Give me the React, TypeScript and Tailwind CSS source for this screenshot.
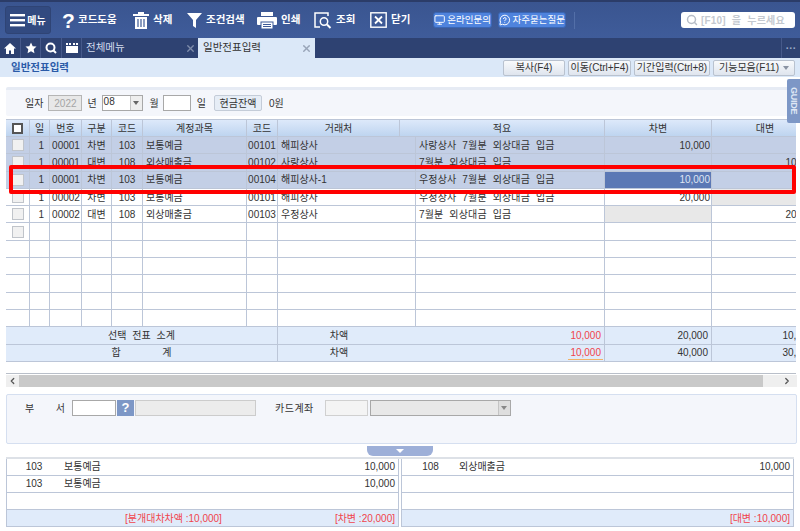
import { ChevronLeft, ChevronRight, MessageCircleQuestion, Monitor, Search, X } from "lucide-react";
import { type FC, type ReactNode } from "react";

const FONT = "font-['Liberation_Sans','Noto_Sans_CJK_KR',sans-serif]";

const rows = [
  { day: "1", no: "00001", kind: "차변", code: "103", account: "보통예금", cCode: "00101", client: "해피상사", memo: "사랑상사 7월분 외상대금 입금", debit: "10,000", credit: "", selected: true },
  { day: "1", no: "00001", kind: "대변", code: "108", account: "외상매출금", cCode: "00102", client: "사랑상사", memo: "7월분 외상대금 입금", debit: "", credit: "10,000", selected: true },
  { day: "1", no: "00001", kind: "차변", code: "103", account: "보통예금", cCode: "00104", client: "해피상사-1", memo: "우정상사 7월분 외상대금 입금", debit: "10,000", credit: "", selected: true, active: true },
  { day: "1", no: "00002", kind: "차변", code: "103", account: "보통예금", cCode: "00101", client: "해피상사", memo: "우정상사 7월분 외상대금 입금", debit: "20,000", credit: "", grayCredit: true },
  { day: "1", no: "00002", kind: "대변", code: "108", account: "외상매출금", cCode: "00103", client: "우정상사", memo: "7월분 외상대금 입금", debit: "", credit: "20,000", grayDebit: true },
];

const ToolItem: FC<{ icon: ReactNode; label: string; width: string }> = ({ icon, label, width }) => (
  <div className={`flex items-center gap-1 shrink-0 ${width}`}>
    {icon}
    <span className="text-[10.5px] font-bold text-white whitespace-nowrap">{label}</span>
  </div>
);

const Cell: FC<{ className?: string; children?: ReactNode }> = ({ className = "", children }) => (
  <div className={`flex items-center border-r border-b border-[#bcc6d8] overflow-hidden whitespace-nowrap ${className}`}>
    {children}
  </div>
);

const TopButton: FC<{ label: string; width: string; children?: ReactNode }> = ({ label, width, children }) => (
  <div className={`h-[16px] flex items-center justify-center gap-1 rounded-[2px] border border-[#b9c2cf] bg-gradient-to-b from-[#f8fafc] to-[#dfe5ee] text-[10px] text-[#333] whitespace-nowrap shrink-0 ${width}`}>
    {label}
    {children}
  </div>
);

const CheckBox = () => <div className="w-[12px] h-[12px] border border-[#c0c4ca] bg-[#f1f1f1]" />;

const SlipRow: FC<{ row?: (typeof rows)[number]; check?: boolean }> = ({ row, check }) => {
  const bg = row?.selected ? "bg-[#c3cfe6]" : "bg-white";
  return (
    <div className={`grid grid-cols-[24px_20px_32px_30px_31px_104px_31px_138px_189px_107px_107px] h-[17.3px] text-[10px] text-[#333] ${bg}`}>
      <Cell className="justify-center">{(row || check) && <CheckBox />}</Cell>
      <Cell className="justify-end pr-[5px]">{row?.day}</Cell>
      <Cell className="justify-center pl-px">{row?.no}</Cell>
      <Cell className="justify-center">{row?.kind}</Cell>
      <Cell className="justify-center">{row?.code}</Cell>
      <Cell className="pl-[3px]">{row?.account}</Cell>
      <Cell className="justify-center">{row?.cCode}</Cell>
      <Cell className="pl-[3px]">{row?.client}</Cell>
      <Cell className="pl-[3px] tracking-[0.15px] [word-spacing:3px]">{row?.memo}</Cell>
      <Cell className={`justify-end pr-[1px] ${row?.active ? "bg-[#5b78b5] text-[#dfe6f4]" : row?.grayDebit ? "bg-[#e8e8e8]" : ""}`}>{row?.debit}</Cell>
      <Cell className={`justify-end pr-[2px] ${row?.grayCredit ? "bg-[#e8e8e8]" : ""}`}>{row?.credit}</Cell>
    </div>
  );
};

const SumRow: FC<{ label: ReactNode; diff: string; debit: string; credit: string; underline?: boolean }> = ({ label, diff, debit, credit, underline }) => (
  <div className="grid grid-cols-[272px_122px_205px_107px_107px] h-[17.3px] bg-[#e0ebfa] text-[10px] text-[#333]">
    <Cell className="justify-center [word-spacing:3px]">{label}</Cell>
    <div className="flex items-center justify-center border-b border-[#bcc6d8]">차액</div>
    <Cell className="justify-end pr-[1px] text-[#f0444c]">
      <span className={underline ? "border-b border-[#f2b266] px-[2px] leading-[13px]" : "px-[2px]"}>{diff}</span>
    </Cell>
    <Cell className="justify-end pr-[3px]">{debit}</Cell>
    <Cell className="justify-end pr-[5px]">{credit}</Cell>
  </div>
);

const LedgerRow: FC<{ code?: string; name?: string; amount?: string; codeW: string }> = ({ code, name, amount, codeW }) => (
  <div className="flex items-center h-[17px] border-b border-[#bcc6d8] text-[10px] text-[#333] pr-[3px] pb-px">
    <span className={`text-center shrink-0 ${codeW}`}>{code}</span>
    <span>{name}</span>
    <span className="ml-auto">{amount}</span>
  </div>
);

export default function App() {
  return (
    <div className={`w-[800px] h-[531px] overflow-hidden bg-white flex flex-col ${FONT}`}>
      {/* toolbar */}
      <div className="h-[38px] shrink-0 flex items-center bg-gradient-to-b from-[#3a5590] to-[#3f5c9a] border-t-2 border-[#2b3c68] pl-[5px]">
        <div className="w-[46px] h-[28px] flex items-center justify-center gap-[2px] rounded-[3px] border border-[#2f4475] bg-[#324a80] shrink-0">
          <svg width="15" height="13" viewBox="0 0 15 13" fill="#fff"><rect y="0" width="15" height="2.4" /><rect y="5" width="15" height="2.4" /><rect y="10" width="15" height="2.4" /></svg>
          <span className="text-[10px] font-bold text-white">메뉴</span>
        </div>
        <div className="w-[11px] shrink-0" />
        <ToolItem width="w-[71px]" label="코드도움" icon={<span className="text-[21px] leading-none font-bold text-white w-[12px] text-center">?</span>} />
        <ToolItem width="w-[54px]" label="삭제" icon={
          <svg width="16" height="17" viewBox="0 0 16 17" fill="#fff"><rect x="5" y="0" width="6" height="2" /><rect x="0" y="2" width="16" height="2" /><path d="M2 5h12v12H2z" /><path d="M5 7v8M8 7v8M11 7v8" stroke="#3d5a97" strokeWidth="1.2" /></svg>
        } />
        <ToolItem width="w-[70px]" label="조건검색" icon={
          <svg width="15" height="15" viewBox="0 0 15 15" fill="#fff"><path d="M0 0h15L9 7v8L6 13V7z" /></svg>
        } />
        <ToolItem width="w-[57px]" label="인쇄" icon={
          <svg width="20" height="17" viewBox="0 0 20 17" fill="#fff"><rect x="4" y="0" width="12" height="4" /><rect x="0" y="5" width="20" height="8" rx="1" /><rect x="4" y="10" width="12" height="7" stroke="#3d5a97" /><path d="M6 12.5h8M6 14.5h8" stroke="#3d5a97" /></svg>
        } />
        <ToolItem width="w-[56px]" label="조회" icon={
          <svg width="18" height="17" viewBox="0 0 18 17" fill="none" stroke="#fff" strokeWidth="1.5"><path d="M7 1H1v14h5M7 1h7v3" /><circle cx="10" cy="9.5" r="3.7" /><path d="M13 12.5l3.5 3.5" strokeWidth="2" /></svg>
        } />
        <ToolItem width="w-[63px]" label="닫기" icon={
          <svg width="17" height="16" viewBox="0 0 17 16" fill="none" stroke="#fff"><rect x="0.8" y="0.8" width="15.4" height="14.4" strokeWidth="1.4" /><path d="M5 4.5l7 7M12 4.5l-7 7" strokeWidth="1.8" /></svg>
        } />
        <div className="w-[59px] h-[16px] flex items-center justify-center gap-[2px] rounded-[3px] bg-[#4f83dd] border border-[#3a66b4] text-[9.5px] text-white whitespace-nowrap shrink-0">
          <Monitor className="w-[12px] h-[12px]" />온라인문의
        </div>
        <div className="w-[68px] h-[16px] ml-[6px] flex items-center justify-center gap-[2px] rounded-[3px] bg-[#4f83dd] border border-[#3a66b4] text-[9.5px] text-white whitespace-nowrap shrink-0">
          <MessageCircleQuestion className="w-[12px] h-[12px]" />자주묻는질문
        </div>
        <div className="w-px h-[17px] ml-[8px] bg-[#536fa8] shrink-0" />
        <div className="w-[114px] h-[16px] ml-auto mr-[5px] flex items-center gap-[3px] pl-[5px] rounded-[3px] bg-white text-[10px] font-bold text-[#c4c9d0] whitespace-nowrap shrink-0 [word-spacing:3px] tracking-[0.2px]">
          <Search className="w-[12px] h-[12px] text-[#b7bdc7]" strokeWidth={3} />[F10] 을 누르세요
        </div>
      </div>

      {/* tabs */}
      <div className="h-[20px] shrink-0 flex bg-[#2e4272] text-[10.5px]">
        <div className="w-[21px] flex items-center justify-center border-r border-[#46598a]">
          <svg width="12" height="11" viewBox="0 0 12 11" fill="#fff"><path d="M6 0l6 5.5h-2V11H7V7.5H5V11H2V5.5H0z" /></svg>
        </div>
        <div className="w-[20px] flex items-center justify-center border-r border-[#46598a]">
          <svg width="12" height="12" viewBox="0 0 24 24" fill="#fff"><path d="M12 1l3.4 7.3 7.6.9-5.6 5.4 1.5 8L12 18.6 5.1 22.6l1.5-8L1 9.2l7.6-.9z" /></svg>
        </div>
        <div className="w-[21px] flex items-center justify-center border-r border-[#46598a]">
          <svg width="12" height="12" viewBox="0 0 12 12" fill="none" stroke="#fff" strokeWidth="2"><circle cx="5.5" cy="5.5" r="4" /><path d="M8 8l3 3" /></svg>
        </div>
        <div className="w-[20px] flex items-center justify-center border-r border-[#46598a]">
          <svg width="12" height="10" viewBox="0 0 12 10" fill="#fff"><rect y="3" width="12" height="7" /><path d="M0 0h2v2H0zM3 0h2v2H3zM7 0h2v2H7zM10 0h2v2h-2z" /></svg>
        </div>
        <div className="w-[116px] flex items-center justify-between pl-[4px] pr-[2px] text-[#d3dcee]">
          전체메뉴<X className="w-[11px] h-[11px] text-[#7e8cab]" strokeWidth={3} />
        </div>
        <div className="w-[117px] flex items-center justify-between pl-[5px] pr-[3px] bg-[#dbe8f8] text-[#333]">
          일반전표입력<X className="w-[11px] h-[11px] text-[#98a4b8]" strokeWidth={3} />
        </div>
        <div className="ml-auto w-[19px] flex items-center justify-center border-l border-[#46598a] text-[#9aa9c7] font-bold leading-none">···</div>
      </div>

      {/* title */}
      <div className="h-[19px] shrink-0 flex items-center bg-[#dbe8f8] pl-[11px] pr-[5px]">
        <span className="text-[10.5px] font-bold text-[#2b5ba8]">일반전표입력</span>
        <div className="ml-auto flex gap-[3px]">
          <TopButton label="복사(F4)" width="w-[62px]" />
          <TopButton label="이동(Ctrl+F4)" width="w-[63px]" />
          <TopButton label="기간입력(Ctrl+8)" width="w-[76px]" />
          <TopButton label="기능모음(F11)" width="w-[82px]">
            <span className="w-0 h-0 border-x-[3px] border-x-transparent border-t-[4px] border-t-[#8a93a3]" />
          </TopButton>
        </div>
      </div>

      {/* search form */}
      <div className="h-[42px] shrink-0 relative pt-[10px] pl-[6px] pr-[3px]">
        <div className="h-[29px] flex items-center bg-[#f4f6fb] border-t-[3px] border-[#e6ebf4] rounded-[2px] text-[10px] text-[#333] pl-[19px]">
          <span>일자</span>
          <div className="w-[34px] h-[16px] ml-[5px] flex items-center justify-center bg-[#e8e8e8] border border-[#b5b5b5] text-[#a5a5a5]">2022</div>
          <span className="ml-[5px]">년</span>
          <div className="w-[41px] h-[16px] ml-[5px] flex border border-[#a8a8a8] bg-white">
            <span className="flex-1 pl-px leading-[12px]">08</span>
            <span className="w-[12px] flex items-center justify-center bg-[#eeeeee] border-l border-[#c4c4c4]">
              <span className="w-0 h-0 border-x-[3px] border-x-transparent border-t-[4px] border-t-[#666]" />
            </span>
          </div>
          <span className="ml-[7px]">월</span>
          <div className="w-[28px] h-[16px] ml-[4px] border border-[#a8a8a8] bg-white" />
          <span className="ml-[6px]">일</span>
          <div className="w-[48px] h-[16px] ml-[8px] flex items-center justify-center rounded-[2px] border border-[#c4ccd8] bg-[#e6edf6]">현금잔액</div>
          <span className="ml-[7px]">0원</span>
        </div>
        <div className="absolute right-0 top-[2px] w-[13px] h-[44px] flex items-center justify-center rounded-l-[2px] bg-[#7d97c6] z-10">
          <span className="[writing-mode:vertical-rl] text-[9px] font-bold text-[#dfe7f5] tracking-tight">GUIDE</span>
        </div>
      </div>

      {/* slip grid */}
      <div className="relative h-[255px] shrink-0 ml-[6px] mr-[4px] overflow-hidden border-b border-[#b9bfc9]">
        <div className="grid grid-cols-[24px_20px_32px_30px_31px_104px_31px_122px_205px_107px_107px] h-[18px] w-[818px] text-[10px] text-[#333] bg-gradient-to-b from-[#dde9fa] to-[#bcd3ef] border-t border-[#bcc6d8]">
          <Cell className="justify-center"><div className="w-[11px] h-[11px] border-2 border-[#555] bg-white" /></Cell>
          {["일", "번호", "구분", "코드", "계정과목", "코드", "거래처", "적요", "차변", "대변"].map((h, i) => (
            <Cell key={i} className="justify-center">{h}</Cell>
          ))}
        </div>
        <div className="w-[818px]">
          {rows.map((r, i) => <SlipRow key={i} row={r} />)}
          <SlipRow check />
          {[0, 1, 2, 3, 4].map((i) => <SlipRow key={i} />)}
          <SumRow label="선택 전표 소계" diff="10,000" debit="20,000" credit="10,000" />
          <SumRow label={<span className="flex w-[60px] justify-between"><span>합</span><span>계</span></span>} diff="10,000" debit="40,000" credit="30,000" underline />
        </div>
        {/* red annotation box */}
        <div className="absolute left-[3px] top-[46px] w-[787px] h-[29px] border-[4px] border-[#ff0000] rounded-[2px]" />
      </div>

      {/* scrollbar */}
      <div className="h-[12px] mt-px shrink-0 ml-[6px] mr-[3px] flex items-center bg-[#efefef]">
        <ChevronLeft className="w-[13px] h-[10px] text-[#555]" strokeWidth={3} />
        <div className="w-[744px] h-full bg-[#c9c9c9]" />
        <ChevronRight className="w-[10px] h-[10px] ml-auto mr-[5px] text-[#555]" strokeWidth={3} />
      </div>

      {/* department panel */}
      <div className="h-[50px] mt-[7px] shrink-0 ml-[6px] mr-[3px] bg-[#f4f6fb] border border-[#d5dff0] rounded-[2px] pt-[5px] pl-[18px] text-[10px] text-[#333]">
        <div className="flex items-center h-[16px]">
          <span className="w-[47px] flex justify-between pr-[7px]"><span>부</span><span>서</span></span>
          <div className="w-[44px] h-[16px] border border-[#a8a8a8] bg-white" />
          <div className="w-[17px] h-[16px] ml-px flex items-center justify-center bg-[#7d97c6] text-white text-[13px] font-bold">?</div>
          <div className="w-[121px] h-[16px] ml-px border border-[#cccccc] bg-[#ececec]" />
          <span className="ml-[19px] tracking-[0.5px]">카드계좌</span>
          <div className="w-[43px] h-[16px] ml-[11px] border border-[#d0d0d0] bg-[#f4f4f4]" />
          <div className="w-[141px] h-[16px] ml-[2px] flex justify-end border border-[#a8a8a8] bg-[#e8e8e8]">
            <span className="w-[12px] flex items-center justify-center border-l border-[#c4c4c4] bg-[#dedede]">
              <span className="w-0 h-0 border-x-[3px] border-x-transparent border-t-[4px] border-t-[#888]" />
            </span>
          </div>
        </div>
      </div>

      {/* collapse handle */}
      <div className="h-[10px] mt-[2px] shrink-0 flex justify-center">
        <div className="w-[66px] h-full flex items-center justify-center bg-[#9dafd8] rounded-b-[6px]">
          <span className="w-0 h-0 border-x-[4px] border-x-transparent border-t-[4px] border-t-white" />
        </div>
      </div>

      {/* ledger */}
      <div className="mx-[6px] mt-px h-[70px] shrink-0 flex gap-[2px] border-t-2 border-[#dde1e7]">
        <div className="w-[393px] border-x border-[#bcc6d8]">
          <LedgerRow codeW="w-[57px] pr-[3px]" code="103" name="보통예금" amount="10,000" />
          <LedgerRow codeW="w-[57px] pr-[3px]" code="103" name="보통예금" amount="10,000" />
          <LedgerRow codeW="w-[57px]" />
          <div className="flex items-center h-[17px] pt-px bg-[#e0ebfa] border-b border-[#bcc6d8] text-[10px] text-[#f0444c] pr-[3px]">
            <span className="ml-[118px]">[분개대차차액 :10,000]</span>
            <span className="ml-auto">[차변 :20,000]</span>
          </div>
        </div>
        <div className="flex-1 border-x border-[#bcc6d8]">
          <LedgerRow codeW="w-[57px]" code="108" name="외상매출금" amount="10,000" />
          <LedgerRow codeW="w-[57px]" />
          <LedgerRow codeW="w-[57px]" />
          <div className="flex items-center justify-end h-[17px] pt-px bg-[#e0ebfa] border-b border-[#bcc6d8] text-[10px] text-[#f0444c] pr-[3px]">
            [대변 :10,000]
          </div>
        </div>
      </div>
    </div>
  );
}
